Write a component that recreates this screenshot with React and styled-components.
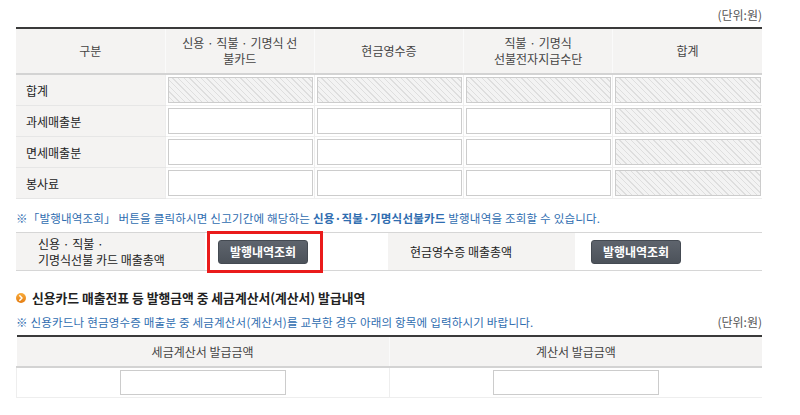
import React from "react";
import styled, { createGlobalStyle, css } from "styled-components";

const GlobalStyle = createGlobalStyle`
  html, body { margin: 0; padding: 0; background: #fff; }
  body {
    font-family: "Noto Sans CJK KR", "Noto Sans", sans-serif;
    color: #333;
    font-size: 12px;
  }
  * { box-sizing: border-box; }
`;

const Page = styled.div`
  width: 746px;
  margin-left: 16px;
  padding-top: 8px;
`;

const Unit = styled.div`
  text-align: right;
  font-size: 12px;
  line-height: 14px;
  color: #555;
  white-space: nowrap;
  margin-bottom: ${(p) => p.$mb || 0}px;
`;

const Table = styled.table`
  width: 100%;
  border-collapse: collapse;
  table-layout: fixed;
  border-top: 2px solid #3a3a3a;
`;

const Th = styled.th`
  height: ${(p) => p.$h}px;
  background: #f4f3f2;
  font-weight: normal;
  color: #444;
  font-size: 12px;
  line-height: 16px;
  text-align: center;
  padding: 0 8px;
  border-left: 1px solid #fafafa;
  border-bottom: 2px solid #d3d3d3;
  &:first-child { border-left: none; }
`;

const LabelTd = styled.td`
  height: 31px;
  background: #f4f3f2;
  padding: 0 0 0 10px;
  text-align: left;
  color: #222;
  border-bottom: 1px solid #e6e6e6;
`;

const InputTd = styled.td`
  padding: 2px 1px 2px 2px;
  border-left: 1px solid #eeeeee;
  border-bottom: 1px solid #eeeeee;
  text-align: ${(p) => (p.$center ? "center" : "left")};
  vertical-align: middle;
`;

const hatch = css`
  background-color: #f3f3f3;
  background-image: repeating-linear-gradient(
    45deg,
    #f3f3f3 0px,
    #f3f3f3 3px,
    #dedede 3px,
    #dedede 4px
  );
`;

const Field = styled.div`
  display: ${(p) => (p.$w ? "inline-block" : "block")};
  width: ${(p) => (p.$w ? `${p.$w}px` : "100%")};
  height: ${(p) => p.$h || 26}px;
  border: 1px solid #cccccc;
  background: #fff;
  vertical-align: middle;
  ${(p) => p.$disabled && hatch}
`;

const Note = styled.p`
  margin: ${(p) => p.$mt || 0}px 0 0;
  font-size: 11.5px;
  letter-spacing: 0.2px;
  line-height: 14px;
  color: #2f6db0;
  white-space: nowrap;
  b { font-weight: bold; }
`;

const ButtonRow = styled.div`
  margin-top: 7px;
  display: grid;
  grid-template-columns: 189px 183px 187px 187px;
  border-top: 1px solid #d6d6d6;
  border-bottom: 1px solid #d6d6d6;
  height: 39px;
`;

const RowLabel = styled.div`
  background: #f4f3f2;
  padding-left: 22px;
  display: flex;
  flex-direction: column;
  justify-content: center;
  font-size: 12px;
  line-height: 16px;
  color: #222;
`;

const LabelLine = styled.span`
  display: block;
  height: 16px;
`;

const RowAction = styled.div`
  display: flex;
  align-items: center;
  padding-left: ${(p) => p.$pl}px;
`;

const Highlight = styled.span`
  position: relative;
  display: inline-flex;
  &::after {
    content: "";
    position: absolute;
    top: -9px;
    bottom: -9px;
    left: -11px;
    right: -15px;
    border: 3px solid #ea1b1b;
    pointer-events: none;
  }
`;

const DarkButton = styled.button`
  width: 90px;
  height: 24px;
  border: 1px solid #444a52;
  border-radius: 3px;
  background: linear-gradient(#5e646d, #4c525a);
  color: #fff;
  font-family: inherit;
  font-size: 12px;
  font-weight: bold;
  line-height: 22px;
  padding: 0;
  cursor: pointer;
`;

const SectionTitle = styled.h3`
  margin: 19px 0 0;
  display: flex;
  align-items: center;
  gap: 6px;
  font-size: 12.8px;
  line-height: 16px;
  font-weight: bold;
  color: #222;
`;

const NoteRow = styled.div`
  margin-top: 9px;
  display: flex;
  justify-content: space-between;
  align-items: center;
  margin-bottom: 6px;
`;

const BulletIcon = () => (
  <svg width="10" height="10" viewBox="0 0 10 10">
    <defs>
      <linearGradient id="og" x1="0" y1="0" x2="0" y2="1">
        <stop offset="0" stopColor="#f9ad3c" />
        <stop offset="1" stopColor="#e47c12" />
      </linearGradient>
    </defs>
    <circle cx="5" cy="5" r="5" fill="url(#og)" />
    <path d="M3.8 2.8 L6 5 L3.8 7.2" stroke="#fff" strokeWidth="1.5" fill="none" strokeLinecap="round" strokeLinejoin="round" />
  </svg>
);

const rows = [
  { label: "합계", disabled: [true, true, true, true] },
  { label: "과세매출분", disabled: [false, false, false, true] },
  { label: "면세매출분", disabled: [false, false, false, true] },
  { label: "봉사료", disabled: [false, false, false, true] },
];

export default function App() {
  return (
    <>
      <GlobalStyle />
      <Page>
        <Unit $mb={5}>(단위:원)</Unit>
        <Table>
          <thead>
            <tr>
              <Th $h={46}>구분</Th>
              <Th $h={46}>
                신용 · 직불 · 기명식 선
                <br />
                불카드
              </Th>
              <Th $h={46}>현금영수증</Th>
              <Th $h={46}>
                직불 · 기명식
                <br />
                선불전자지급수단
              </Th>
              <Th $h={46}>합계</Th>
            </tr>
          </thead>
          <tbody>
            {rows.map((r) => (
              <tr key={r.label}>
                <LabelTd>{r.label}</LabelTd>
                {r.disabled.map((d, i) => (
                  <InputTd key={i}>
                    <Field $disabled={d} />
                  </InputTd>
                ))}
              </tr>
            ))}
          </tbody>
        </Table>

        <Note $mt={12}>
          ※「발행내역조회」 버튼을 클릭하시면 신고기간에 해당하는 <b>신용·직불·기명식선불카드</b> 발행내역을 조회할 수 있습니다.
        </Note>

        <ButtonRow>
          <RowLabel>
            <LabelLine>신용 · 직불 ·</LabelLine>
            <LabelLine>기명식선불 카드 매출총액</LabelLine>
          </RowLabel>
          <RowAction $pl={13}>
            <Highlight>
              <DarkButton type="button">발행내역조회</DarkButton>
            </Highlight>
          </RowAction>
          <RowLabel>현금영수증 매출총액</RowLabel>
          <RowAction $pl={16}>
            <DarkButton type="button">발행내역조회</DarkButton>
          </RowAction>
        </ButtonRow>

        <SectionTitle>
          <BulletIcon />
          신용카드 매출전표 등 발행금액 중 세금계산서(계산서) 발급내역
        </SectionTitle>

        <NoteRow>
          <Note>※ 신용카드나 현금영수증 매출분 중 세금계산서(계산서)를 교부한 경우 아래의 항목에 입력하시기 바랍니다.</Note>
          <Unit>(단위:원)</Unit>
        </NoteRow>

        <Table>
          <thead>
            <tr>
              <Th $h={31}>세금계산서 발급금액</Th>
              <Th $h={31}>계산서 발급금액</Th>
            </tr>
          </thead>
          <tbody>
            <tr>
              <InputTd $center>
                <Field $w={166} $h={25} />
              </InputTd>
              <InputTd $center>
                <Field $w={166} $h={25} />
              </InputTd>
            </tr>
          </tbody>
        </Table>
      </Page>
    </>
  );
}
